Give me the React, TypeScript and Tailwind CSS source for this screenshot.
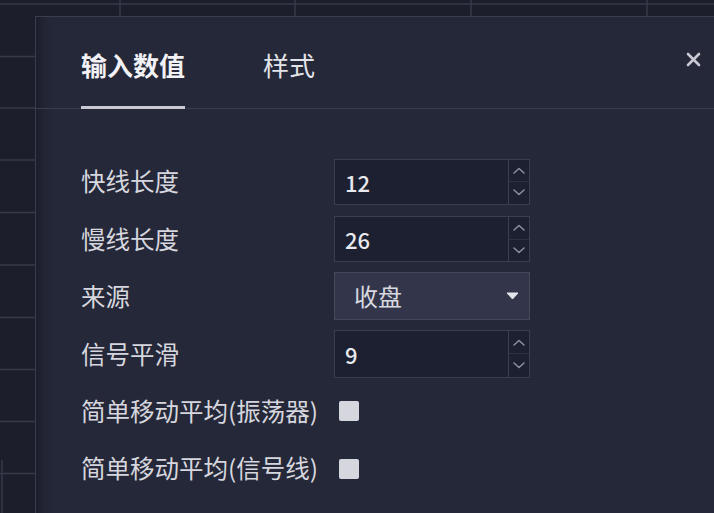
import React from "react";

const FONT = "font-['Noto_Sans_CJK_SC','Noto_Sans',sans-serif]";

function GridBg() {
  const hs = [4, 56.5, 108, 160, 212.5, 265, 317.5, 369.5, 421.5, 473.5];
  const vs = [120, 295, 471, 647];
  return (
    <svg className="absolute inset-0" width="714" height="513">
      {hs.map((y) => (
        <line key={"h" + y} x1="0" x2="714" y1={y} y2={y} stroke="#363a49" strokeWidth="1.5" />
      ))}
      {vs.map((x) => (
        <line key={"v" + x} x1={x} x2={x} y1="0" y2="513" stroke="#363a49" strokeWidth="1.5" />
      ))}
      <line x1="2" x2="2" y1="460" y2="513" stroke="#363a49" strokeWidth="1.5" />
    </svg>
  );
}

function Chevron({ up }: { up?: boolean }) {
  return (
    <svg width="12" height="7" viewBox="0 0 12 7">
      <path
        d={up ? "M1 6 L6 1.5 L11 6" : "M1 1 L6 5.5 L11 1"}
        fill="none"
        stroke="#8d90a0"
        strokeWidth="1.5"
        strokeLinecap="round"
        strokeLinejoin="round"
      />
    </svg>
  );
}

function NumberInput({ value, h }: { value: string; h: string }) {
  return (
    <div className={`flex ${h} w-[196px] border border-[#3b3e51] bg-[#1d2030]`}>
      <div className="flex flex-1 items-center pl-[10px] text-[22px] font-medium leading-none text-[#e8e9ee]">
        {value}
      </div>
      <div className="flex w-[21px] flex-col border-l border-[#3b3e51]">
        <div className="flex flex-1 items-center justify-center border-b border-[#2e3142]">
          <Chevron up />
        </div>
        <div className="flex flex-1 items-center justify-center">
          <Chevron />
        </div>
      </div>
    </div>
  );
}

function Checkbox() {
  return <div className="ml-[5px] h-[20px] w-[20px] rounded-[2px] bg-[#d6d7de]" />;
}

export default function App() {
  const rows: { label: string; control: React.ReactNode }[] = [
    { label: "快线长度", control: <NumberInput value="12" h="h-[46px]" /> },
    { label: "慢线长度", control: <NumberInput value="26" h="h-[46px]" /> },
    {
      label: "来源",
      control: (
        <div className="flex h-[48px] w-[196px] items-center justify-between border border-[#45485b] bg-[#33364a] pl-[19px] pr-[10px]">
          <span className="text-[24px] leading-none text-[#d8d9e0]">收盘</span>
          <svg width="13" height="8" viewBox="0 0 13 8">
            <path d="M1 1 L12 1 L6.5 7 Z" fill="#e4e5ea" stroke="#e4e5ea" strokeWidth="1" strokeLinejoin="round" />
          </svg>
        </div>
      ),
    },
    { label: "信号平滑", control: <NumberInput value="9" h="h-[48px]" /> },
    { label: "简单移动平均(振荡器)", control: <Checkbox /> },
    { label: "简单移动平均(信号线)", control: <Checkbox /> },
  ];

  return (
    <div className={`relative h-[513px] w-[714px] overflow-hidden bg-[#1c1f2b] ${FONT}`}>
      <GridBg />
      <div className="absolute left-[35px] top-[16px] h-[520px] w-[690px] border border-[#3a3d4f] bg-[#252838] shadow-[inset_12px_0_10px_-6px_rgba(0,0,0,0.25)]">
        {/* header */}
        <div className="flex h-[92px] items-stretch border-b border-[#3a3d4f] pl-[45px] pr-[22px]">
          <div className="flex flex-col">
            <div className="flex-1 pt-[35px] text-[26px] font-bold leading-none text-[#f2f2f6]">输入数值</div>
            <div className="-mb-px h-[3px] bg-[#c9cad2]" />
          </div>
          <div className="ml-[78px] pt-[35px] text-[26px] leading-none text-[#e2e3e9]">样式</div>
          <div className="ml-auto pt-[34px]">
            <svg width="17" height="17" viewBox="0 0 17 17">
              <path d="M3 3 L14 14 M14 3 L3 14" stroke="#c8c9d2" strokeWidth="2.6" strokeLinecap="round" />
            </svg>
          </div>
        </div>
        {/* body */}
        <div className="grid grid-cols-[253px_196px] pl-[45px] pt-[44px]">
          {rows.map((r) => (
            <React.Fragment key={r.label}>
              <div className="flex h-[57.4px] items-center text-[24.5px] leading-none text-[#d6d7de]">{r.label}</div>
              <div className="flex h-[57.4px] items-center">{r.control}</div>
            </React.Fragment>
          ))}
        </div>
      </div>
    </div>
  );
}
